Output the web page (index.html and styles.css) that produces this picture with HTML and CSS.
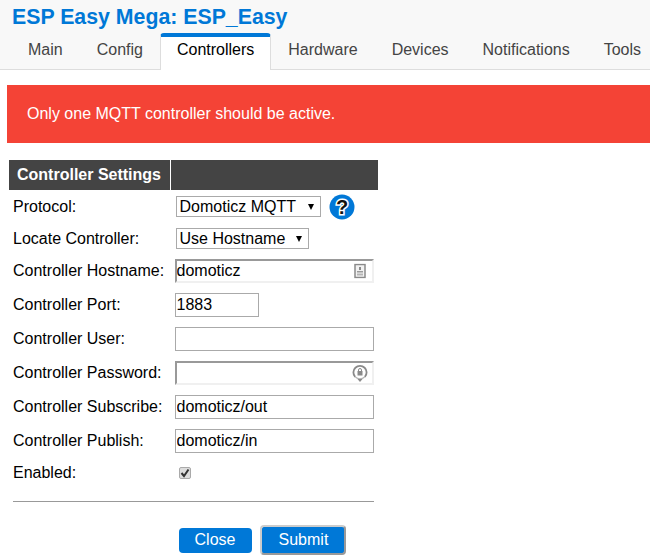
FILE: index.html
```html
<!DOCTYPE html>
<html lang="en">
<head>
    <meta charset="UTF-8">
    <meta name="viewport" content="width=device-width, initial-scale=1.0">
    <title>ESP Easy Mega: ESP_Easy</title>
    <link rel="stylesheet" href="styles.css">
</head>
<body>

<header class="header">
    <h1>ESP Easy Mega: ESP_Easy</h1>
    <nav class="tabs">
        <a class="tab" href="#">Main</a>
        <a class="tab" href="#">Config</a>
        <a class="tab active" href="#">Controllers</a>
        <a class="tab" href="#">Hardware</a>
        <a class="tab" href="#">Devices</a>
        <a class="tab" href="#">Notifications</a>
        <a class="tab" href="#">Tools</a>
    </nav>
</header>

<div class="alert">Only one MQTT controller should be active.</div>

<form>
<table class="settings">
    <tr class="head">
        <th>Controller Settings</th>
        <th></th>
    </tr>
    <tr class="row-protocol">
        <td>Protocol:</td>
        <td class="with-help">
            <span class="select-wrap protocol">
                <select><option>Domoticz MQTT</option></select>
            </span>
            <!-- help button -->
            <svg class="help" width="26" height="26" viewBox="0 0 26 26">
                <circle cx="13" cy="13" r="12.5" fill="#0078d7"/>
                <text x="13" y="20" text-anchor="middle" class="help-mark">?</text>
            </svg>
        </td>
    </tr>
    <tr class="row-locate">
        <td>Locate Controller:</td>
        <td>
            <span class="select-wrap locate">
                <select><option>Use Hostname</option></select>
            </span>
        </td>
    </tr>
    <tr>
        <td>Controller Hostname:</td>
        <td>
            <span class="field-wrap">
                <input type="text" class="wide sunken" value="domoticz">
                <svg class="field-icon" width="12" height="15" viewBox="0 0 12 15">
                    <rect x="1" y="1" width="10" height="13" fill="#f2f2f2" stroke="#8a8a8a" stroke-width="1.5"/>
                    <rect x="5" y="3.5" width="2" height="3" fill="#8a8a8a"/>
                    <rect x="3" y="7.5" width="6" height="1.5" fill="#9a9a9a"/>
                    <rect x="3" y="10" width="6" height="2" fill="#b5b5b5"/>
                </svg>
            </span>
        </td>
    </tr>
    <tr>
        <td>Controller Port:</td>
        <td><input type="text" class="port" value="1883"></td>
    </tr>
    <tr>
        <td>Controller User:</td>
        <td><input type="text" class="wide"></td>
    </tr>
    <tr>
        <td>Controller Password:</td>
        <td>
            <span class="field-wrap">
                <input type="password" class="wide sunken">
                <svg class="field-icon key" width="16" height="18" viewBox="0 0 16 18">
                    <path d="M3.2 13a6.6 6.6 0 1 1 9.6 0" fill="none" stroke="#8a8a8a" stroke-width="1.8"/>
                    <path d="M3.4 13a6.6 6.6 0 0 0 9.2 0" fill="none" stroke="#b5b5b5" stroke-width="1.2"/>
                    <rect x="5.5" y="7" width="5" height="4.5" fill="#8a8a8a"/>
                    <path d="M6.5 7v-1a1.5 1.5 0 0 1 3 0v1" fill="none" stroke="#8a8a8a"/>
                    <path d="M8 18l-2.5-3h5z" fill="#8a8a8a"/>
                </svg>
            </span>
        </td>
    </tr>
    <tr>
        <td>Controller Subscribe:</td>
        <td><input type="text" class="wide" value="domoticz/out"></td>
    </tr>
    <tr>
        <td>Controller Publish:</td>
        <td><input type="text" class="wide" value="domoticz/in"></td>
    </tr>
    <tr class="row-enabled">
        <td>Enabled:</td>
        <td>
            <span class="check">
                <input type="checkbox" checked>
                <svg width="12" height="12" viewBox="0 0 12 12">
                    <path d="M2.5 6l2.5 3L9.5 2.5" fill="none" stroke="#333" stroke-width="2"/>
                </svg>
            </span>
        </td>
    </tr>
    <tr class="row-rule">
        <td colspan="2"><hr></td>
    </tr>
    <tr class="row-buttons">
        <td></td>
        <td>
            <button type="button" class="button">Close</button>
            <button type="button" class="button focused">Submit</button>
        </td>
    </tr>
</table>
</form>

</body>
</html>
```

FILE: styles.css
```css
body {
    font-family: "Liberation Sans", Arial, sans-serif;
    font-size: 16px;
    margin: 0;
    padding: 0;
    color: #000;
    background-color: #fff;
}

.header {
    height: 69px;
    background-color: #f8f8f8;
    border-bottom: 1px solid #ddd;
    display: flex;
    flex-direction: column;
    justify-content: space-between;
}

h1 {
    margin: 5px 0 0 12px;
    font-size: 21.3px;
    line-height: 24px;
    font-weight: bold;
    color: #0078d7;
}

.tabs {
    display: flex;
    padding-left: 11px;
    height: 37px;
    margin-bottom: -1px;
    white-space: nowrap;
}

.tab {
    padding: 7px 17px 0;
    line-height: 20px;
    color: #444;
    text-decoration: none;
}

.tab.active {
    padding: 3px 16px 0 16px;
    color: #000;
    background-color: #fff;
    border: 1px solid #ddd;
    border-top: 4px solid #0078d7;
    border-bottom: none;
    border-radius: 4px 4px 0 0;
}

.alert {
    margin: 15px 0 17px 7px;
    height: 58px;
    line-height: 58px;
    padding-left: 20px;
    background-color: #f44336;
    color: #fff;
}

.settings {
    margin-left: 9px;
    width: 369px;
    border-collapse: collapse;
    table-layout: fixed;
}

.settings th {
    height: 30px;
    padding: 0 0 0 8px;
    background-color: #444;
    color: #fff;
    font-size: 16px;
    text-align: left;
    border-right: 1px solid #fff;
}

.settings th:first-child {
    width: 153px;
}

.settings th:last-child {
    border-right: none;
}

.settings td {
    height: 34px;
    padding: 0 0 0 4px;
    vertical-align: middle;
}

.settings tr td:first-child {
    padding-left: 4px;
    white-space: nowrap;
}

.settings .row-protocol td {
    height: 33px;
}

.settings .row-locate td {
    height: 31px;
}

.settings .row-enabled td {
    height: 28px;
}

.settings .row-enabled td:first-child {
    height: 27px;
    padding-top: 1px;
}

.settings .row-rule td {
    height: 30px;
}

.settings .row-buttons td {
    height: 48px;
}

.with-help {
    display: flex;
    align-items: center;
    height: 33px;
}

.select-wrap {
    position: relative;
    display: inline-block;
    margin-left: 1px;
    vertical-align: middle;
}

.select-wrap::after {
    content: "";
    position: absolute;
    top: 8px;
    right: 7px;
    border-left: 3.5px solid transparent;
    border-right: 3.5px solid transparent;
    border-top: 6px solid #000;
    pointer-events: none;
}

select {
    appearance: none;
    display: block;
    height: 21px;
    padding: 0 0 0 3px;
    font-family: inherit;
    font-size: 16px;
    color: #000;
    background-color: #fff;
    border: 1px solid #aaa;
    border-radius: 0;
}

.protocol select {
    width: 145px;
}

.locate select {
    width: 133px;
}

.help {
    margin-left: 8px;
}

.help-mark {
    font-family: "Liberation Sans", Arial, sans-serif;
    font-size: 20px;
    font-weight: bold;
    fill: #111;
    stroke: #fff;
    stroke-width: 3px;
    paint-order: stroke;
}

input[type="text"], input[type="password"] {
    box-sizing: border-box;
    display: block;
    height: 24px;
    padding: 0 1px;
    font-family: inherit;
    font-size: 16px;
    color: #000;
    background-color: #fff;
    border: 1px solid #aaa;
    border-radius: 0;
    outline: none;
}

.wide {
    width: 199px;
}

.port {
    width: 84px;
}

input.sunken {
    border: 2px solid #f0f0f0;
    border-top-color: #999;
    border-left-color: #999;
    padding: 0;
}

.field-wrap {
    position: relative;
    display: block;
    width: 199px;
}

.field-icon {
    position: absolute;
    top: 50%;
    right: 8px;
    transform: translateY(-50%);
}

.field-icon.key {
    right: 6px;
}

.check {
    position: relative;
    display: inline-block;
    width: 12px;
    height: 12px;
    margin-left: 4px;
    vertical-align: middle;
}

.check input {
    appearance: none;
    display: block;
    box-sizing: border-box;
    width: 12px;
    height: 12px;
    margin: 0;
    background-color: #ddd;
    border: 1px solid #aaa;
    border-radius: 2px;
}

.check svg {
    position: absolute;
    top: 0;
    left: 0;
}

hr {
    margin: 0 4px 0 0;
    border: none;
    border-top: 1px solid #999;
}

.button {
    box-sizing: border-box;
    width: 73px;
    height: 25px;
    margin: 0 4.5px 0 4px;
    padding: 0;
    font-family: inherit;
    font-size: 16px;
    color: #fff;
    background-color: #0078d7;
    border: none;
    border-radius: 4px;
    vertical-align: middle;
    cursor: pointer;
}

.button.focused {
    width: 86px;
    height: 30px;
    margin-left: 0;
    border: 2px solid #999;
    border-top-color: #ccc;
    border-left-color: #ccc;
}
```
